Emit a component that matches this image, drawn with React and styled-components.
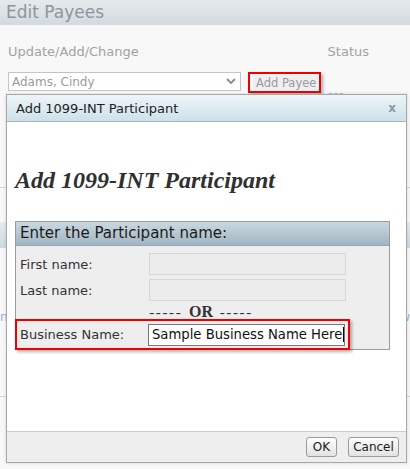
import React from 'react';
import styled, { createGlobalStyle } from 'styled-components';

const Global = createGlobalStyle`
  html, body { margin: 0; padding: 0; }
  body {
    width: 410px;
    height: 469px;
    overflow: hidden;
    background: #f8f8f8;
    font-family: "DejaVu Sans", Verdana, sans-serif;
  }
`;

const Page = styled.div`
  position: relative;
  width: 410px;
  height: 469px;
  overflow: hidden;
  background: #f8f8f8;
`;

const PageHeader = styled.div`
  height: 25px;
  line-height: 25px;
  padding-left: 6px;
  font-size: 17px;
  color: #8e959b;
  background: linear-gradient(#e6eaed, #d2dadf);
`;

const Content = styled.div`
  padding: 0 8px;
`;

const ColumnRow = styled.div`
  display: flex;
  margin-top: 19px;
  font-size: 13px;
  color: #a2a2a2;
  height: 18px;
  .status { margin-left: auto; margin-right: 33px; }
`;

const SelectRow = styled.div`
  display: flex;
  align-items: flex-start;
  margin-top: 10px;
  gap: 7px;
`;

const FakeSelect = styled.div`
  width: 228px;
  height: 17px;
  border: 1px solid #c4c4c4;
  background: #fff;
  display: flex;
  align-items: center;
  padding-left: 3px;
  font-size: 12px;
  color: #9a9a9a;
  box-sizing: content-box;
  flex: none;
  svg { margin-left: auto; margin-right: 4px; }
`;

const Highlight = styled.div`
  border: 2px solid #ee0000;
  box-shadow: 2px 2px 3px rgba(0, 0, 0, 0.3);
  display: flex;
  align-items: center;
  flex: none;
  width: ${p => p.$w}px;
  height: ${p => p.$h}px;
  margin-left: ${p => p.$ml || 0}px;
  box-sizing: border-box;
`;

const GhostButton = styled.div`
  font-size: 11.5px;
  white-space: nowrap;
  color: #9a98a4;
  background: #efefef;
  padding: 1px 3px;
  margin-left: 3px;
`;

const Links = styled.div`
  font-size: 10px;
  color: #9cb4cf;
  margin: 0 0 0 320px;
  height: 10px;
  line-height: 10px;
`;

const BackPanel = styled.div`
  margin-top: ${p => p.$mt}px;
  height: ${p => p.$h}px;
  border-bottom: 1px solid #d4d4d4;
`;

const BackHeader = styled.div`
  height: 26px;
  margin-top: ${p => p.$mt}px;
  background: linear-gradient(#e6ecef, #cdd8de);
`;

const BackLinks = styled.div`
  padding-top: ${p => p.$pt}px;
  display: flex;
  justify-content: space-between;
  font-size: 12px;
  line-height: 18px;
  color: #8fb3d6;
`;

const Modal = styled.div`
  position: absolute;
  left: 6px;
  top: 94px;
  width: 401px;
  height: 369px;
  box-sizing: border-box;
  border: 1px solid #a8a8a8;
  background: #fff;
  display: flex;
  flex-direction: column;
  box-shadow: 0 0 3px rgba(0, 0, 0, 0.15);
`;

const TitleBar = styled.div`
  height: 26px;
  flex: none;
  display: flex;
  align-items: center;
  padding: 0 10px 0 9px;
  background: linear-gradient(#eef5f8, #cde1e9);
  border-bottom: 1px solid #a8b4ba;
  font-size: 13px;
  color: #1e1e1e;
  .x {
    margin-left: auto;
    font-size: 12px;
    font-weight: bold;
    color: #8a9aa3;
  }
`;

const Body = styled.div`
  flex: 1;
  padding: 44px 16px 0 8px;
`;

const Heading = styled.h1`
  margin: 0;
  font-family: "Liberation Serif", "Times New Roman", serif;
  font-style: italic;
  font-weight: bold;
  font-size: 24px;
  line-height: 28px;
  color: #303030;
`;

const Panel = styled.div`
  margin-top: 27px;
  width: 375px;
  height: 129px;
  box-sizing: border-box;
  border: 1px solid #9c9c9c;
  background: #eeeeee;
`;

const PanelHeader = styled.div`
  height: 23px;
  line-height: 23px;
  padding-left: 4px;
  font-size: 15px;
  color: #1b1b1b;
  background: linear-gradient(#cad8e0, #a1b5c1);
  border-bottom: 1px solid #95a7b2;
`;

const Rows = styled.div`
  padding: 7px 0 0 4px;
  display: flex;
  flex-direction: column;
  gap: 4px;
`;

const Row = styled.div`
  display: flex;
  align-items: center;
  height: 22px;
`;

const Label = styled.div`
  width: ${p => p.$w || 129}px;
  font-size: 13px;
  color: #333;
  padding-left: ${p => p.$pl || 0}px;
`;

const Input = styled.div`
  width: 197px;
  height: 22px;
  box-sizing: border-box;
  border: 1px solid ${p => (p.$active ? '#777' : '#d6d6d6')};
  background: ${p => (p.$active ? '#fff' : '#ececec')};
  font-size: 13.2px;
  color: #111;
  display: flex;
  align-items: center;
  padding-left: 3px;
  white-space: nowrap;
  .caret {
    display: inline-block;
    width: 1px;
    height: 15px;
    background: #000;
    margin-left: 1px;
  }
`;

const Or = styled.div`
  text-align: center;
  width: 370px;
  margin-left: -4px;
  font-family: "Liberation Serif", "Times New Roman", serif;
  font-size: 15px;
  line-height: 14px;
  color: #333;
  .dash { letter-spacing: 1.6px; }
  b { font-size: 16px; margin: 0 3px; }
`;

const Footer = styled.div`
  height: 30px;
  flex: none;
  background: #eeeeee;
  border-top: 1px solid #cccccc;
  display: flex;
  justify-content: flex-end;
  align-items: center;
  gap: 11px;
  padding-right: 7px;
`;

const Button = styled.button`
  width: ${p => p.$w}px;
  height: 20px;
  padding: 0;
  font-family: "DejaVu Sans", Verdana, sans-serif;
  font-size: 12px;
  color: #1a1a1a;
  border: 1px solid #9a9a9a;
  border-radius: 3px;
  background: linear-gradient(#fdfdfd, #e2e2e2);
`;

export default function App() {
  return (
    <Page>
      <Global />
      <PageHeader>Edit Payees</PageHeader>
      <Content>
        <ColumnRow>
          <span>Update/Add/Change</span>
          <span className="status">Status</span>
        </ColumnRow>
        <SelectRow>
          <FakeSelect>
            Adams, Cindy
            <svg width="10" height="7" viewBox="0 0 10 7">
              <path d="M1 1l4 4 4-4" fill="none" stroke="#8a8a8a" strokeWidth="1.8" />
            </svg>
          </FakeSelect>
          <Highlight $w={73} $h={21}>
            <GhostButton>Add Payee</GhostButton>
          </Highlight>
        </SelectRow>
        <Links>???</Links>
      </Content>
      <BackPanel $mt={0} $h={84} />
      <BackHeader $mt={34} />
      <BackLinks $pt={60}>
        <span>nk</span>
        <span>w</span>
      </BackLinks>
      <BackPanel $mt={30} $h={40} />

      <Modal>
        <TitleBar>
          Add 1099-INT Participant
          <span className="x">x</span>
        </TitleBar>
        <Body>
          <Heading>Add 1099-INT Participant</Heading>
          <Panel>
            <PanelHeader>Enter the Participant name:</PanelHeader>
            <Rows>
              <Row>
                <Label>First name:</Label>
                <Input />
              </Row>
              <Row>
                <Label>Last name:</Label>
                <Input />
              </Row>
              <Or>
                <span className="dash">-----</span> <b>OR</b> <span className="dash">-----</span>
              </Or>
            </Rows>
            <Highlight $w={335} $h={31} $ml={-1}>
              <Row>
                <Label $w={128} $pl={3}>Business Name:</Label>
                <Input $active>
                  Sample Business Name Here<span className="caret" />
                </Input>
              </Row>
            </Highlight>
          </Panel>
        </Body>
        <Footer>
          <Button $w={31}>OK</Button>
          <Button $w={51}>Cancel</Button>
        </Footer>
      </Modal>
    </Page>
  );
}
